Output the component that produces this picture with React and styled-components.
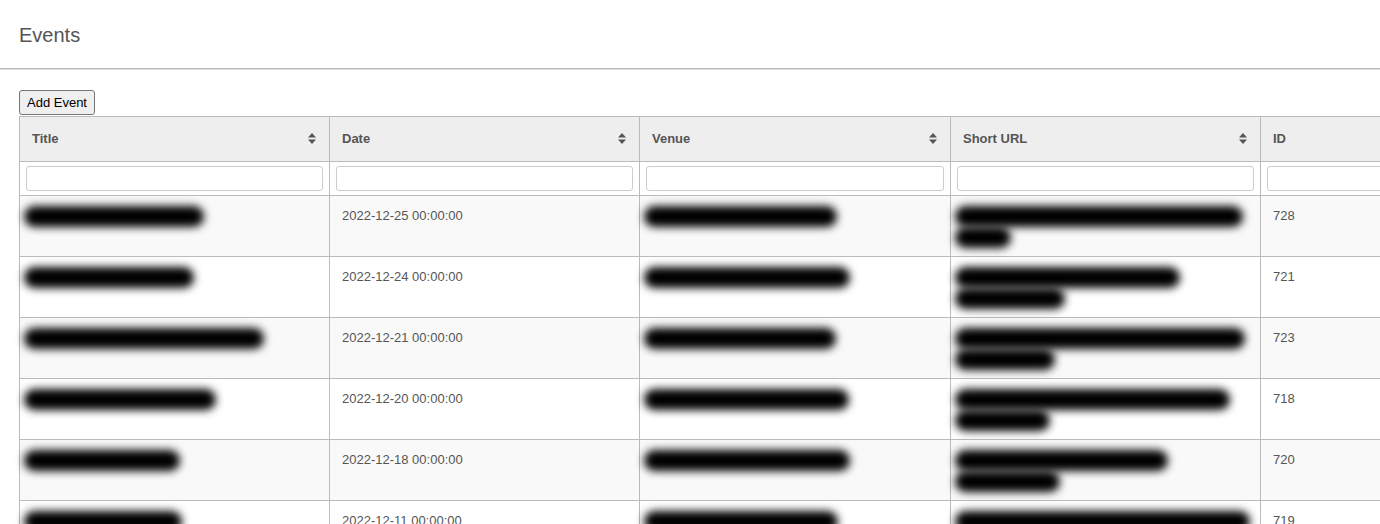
import React from 'react'
import styled, { createGlobalStyle } from 'styled-components'

const GlobalStyle = createGlobalStyle`
  html, body {
    margin: 0;
    padding: 0;
    overflow: hidden;
    background: #fff;
    font-family: "Liberation Sans", Arial, sans-serif;
    color: #555;
  }
`

const events = [
  { title: [180], date: '2022-12-25 00:00:00', venue: [193], url: [288, 56], id: 728 },
  { title: [170], date: '2022-12-24 00:00:00', venue: [206], url: [225, 110], id: 721 },
  { title: [240], date: '2022-12-21 00:00:00', venue: [192], url: [290, 100], id: 723 },
  { title: [192], date: '2022-12-20 00:00:00', venue: [205], url: [275, 95], id: 718 },
  { title: [156], date: '2022-12-18 00:00:00', venue: [206], url: [213, 105], id: 720 },
  { title: [158], date: '2022-12-11 00:00:00', venue: [194], url: [295, 90], id: 719 },
]

const columns = [
  { name: 'Title', width: 310 },
  { name: 'Date', width: 310 },
  { name: 'Venue', width: 311 },
  { name: 'Short URL', width: 310 },
  { name: 'ID', width: 310 },
]

function SortIcon() {
  return (
    <svg width="8" height="11" viewBox="0 0 8 11">
      <path d="M4 0 L8 4.5 H0 Z" fill="#555" />
      <path d="M4 11 L8 6.5 H0 Z" fill="#555" />
    </svg>
  )
}

function Redacted({ widths }) {
  return (
    <BlobStack>
      {widths.map((w, i) => (
        <Blob key={i} style={{ width: w }} />
      ))}
    </BlobStack>
  )
}

function App() {
  return (
    <Page>
      <GlobalStyle />
      <Header>
        <Heading>Events</Heading>
      </Header>
      <Content>
        <AddButton>Add Event</AddButton>
        <Table>
          <colgroup>
            {columns.map((c) => (
              <Col key={c.name} width={c.width} />
            ))}
          </colgroup>
          <thead>
            <tr>
              {columns.map((c) => (
                <HeadCell key={c.name}>
                  <HeadInner>
                    <span>{c.name}</span>
                    {c.name !== 'ID' && <SortIcon />}
                  </HeadInner>
                </HeadCell>
              ))}
            </tr>
            <tr>
              {columns.map((c) => (
                <FilterCell key={c.name}>
                  <FilterInput type="text" />
                </FilterCell>
              ))}
            </tr>
          </thead>
          <tbody>
            {events.map((e, i) => (
              <Row key={e.id} striped={i % 2 === 0}>
                <Cell><Redacted widths={e.title} /></Cell>
                <Cell>{e.date}</Cell>
                <Cell><Redacted widths={e.venue} /></Cell>
                <Cell><Redacted widths={e.url} /></Cell>
                <Cell>{e.id}</Cell>
              </Row>
            ))}
          </tbody>
        </Table>
      </Content>
    </Page>
  )
}

export default App

const Page = styled.div`
  width: 1380px;
  height: 524px;
  overflow: hidden;
`

const Header = styled.div`
  height: 68px;
  padding: 0 19px;
  display: flex;
  align-items: center;
  border-bottom: 1px solid #bbb;
  box-shadow: 0 1px 0 #ddd;
`

const Heading = styled.h1`
  margin: 0;
  font-size: 20px;
  font-weight: normal;
  color: #555;
  padding-top: 2px;
`

const Content = styled.div`
  padding: 21px 19px 0;
`

const AddButton = styled.button`
  display: block;
  height: 25px;
  margin-bottom: 1px;
  padding: 0 7px;
  font-family: "Liberation Sans", Arial, sans-serif;
  font-size: 13px;
  color: #000;
  background: #efefef;
  border: 1px solid #767676;
  border-radius: 3px;
`

const Table = styled.table`
  border-collapse: collapse;
  table-layout: fixed;
  width: 1551px;
  font-size: 13px;
  color: #555;
`

const Col = styled.col`
  width: ${(p) => p.width}px;
`

const HeadCell = styled.th`
  height: 42px;
  padding: 0 12px 2px;
  background: #eee;
  border: 1px solid #bbb;
  text-align: left;
  font-weight: bold;
  color: #555;
`

const HeadInner = styled.div`
  display: flex;
  align-items: center;
  justify-content: space-between;
  padding-right: 1px;
`

const FilterCell = styled.td`
  height: 33px;
  padding: 0 6px;
  border: 1px solid #bbb;
  background: #fff;
`

const FilterInput = styled.input`
  box-sizing: border-box;
  width: 100%;
  height: 25px;
  border: 1px solid #ccc;
  border-radius: 3px;
  background: #fff;
`

const Row = styled.tr`
  background: ${(p) => (p.striped ? '#f9f9f9' : '#fff')};
`

const Cell = styled.td`
  height: 36px;
  padding: 11px 12px 13px;
  vertical-align: top;
  line-height: 18px;
  border: 1px solid #bbb;
`

const BlobStack = styled.div`
  height: 36px;
  display: flex;
  flex-direction: column;
  gap: 0;
  margin-left: -8px;
  margin-top: -1px;
`

const Blob = styled.span`
  display: block;
  flex: none;
  height: 21px;
  background: #000;
  border-radius: 11px;
  filter: blur(4px);
`
